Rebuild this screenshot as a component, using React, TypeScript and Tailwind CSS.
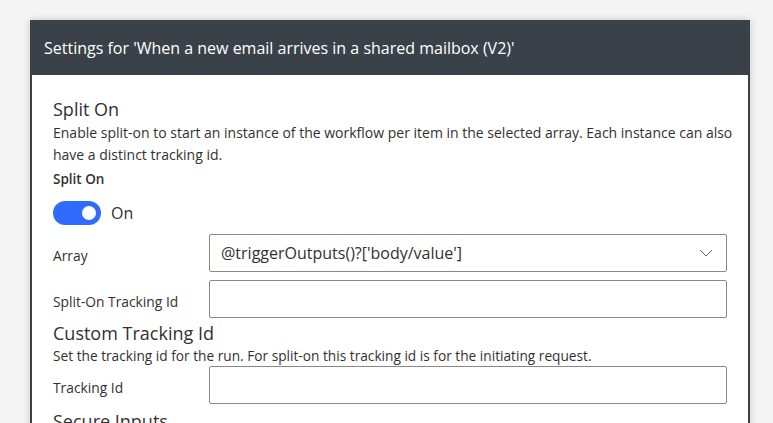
import React from "react";

const font = { fontFamily: "'Open Sans', 'Noto Sans', sans-serif" };

const Field = ({ label, value, select }: { label: string; value?: string; select?: boolean }) => (
  <div className="flex items-center">
    <label className="w-[156px] shrink-0 pt-[6px] text-[13.8px] text-[#323130]">{label}</label>
    <div className="flex h-[38px] w-[518px] items-center justify-between rounded-[2px] border border-[#8a8886] bg-white px-[11px]">
      <span className="text-[16px] text-[#323130]">{value}</span>
      {select && (
        <svg width="14" height="8" viewBox="0 0 14 8" className="mr-[2px]">
          <path d="M1 1 L7 7 L13 1" fill="none" stroke="#605e5c" strokeWidth="1" />
        </svg>
      )}
    </div>
  </div>
);

const App = () => {
  return (
    <div className="h-[423px] w-[773px] overflow-hidden bg-[#f4f4f4] pt-[20px] pl-[30px]" style={font}>
      <div className="h-[420px] w-[720px] border-x-2 border-[#3b4148] bg-white shadow-[0_0_8px_rgba(0,0,0,0.18)]">
        <div className="flex h-[55px] items-center bg-[#3b4148] px-[12px] text-[16px] text-white">
          Settings for 'When a new email arrives in a shared mailbox (V2)'
        </div>
        <div className="px-[21px] pt-[21px] text-[#323130]">
          <h2 className="text-[18px] leading-[26px]">Split On</h2>
          <p className="w-[690px] text-[14px] leading-[22px]">
            Enable split-on to start an instance of the workflow per item in the selected array. Each instance can also have a distinct tracking id.
          </p>
          <div className="mt-[2px] text-[13.5px] font-semibold leading-[22px]">Split On</div>
          <div className="mt-[11px] flex items-center gap-[10px]">
            <div className="flex h-[24px] w-[48px] items-center justify-end rounded-full bg-[#2f6bff] pr-[5px]">
              <div className="h-[14px] w-[14px] rounded-full bg-white" />
            </div>
            <span className="text-[16px]">On</span>
          </div>
          <div className="mt-[9px] flex flex-col gap-[8px]">
            <Field label="Array" value="@triggerOutputs()?['body/value']" select />
            <Field label="Split-On Tracking Id" />
          </div>
          <h2 className="mt-[2px] text-[18px] leading-[26px]">Custom Tracking Id</h2>
          <p className="text-[13.7px] leading-[20px]">
            Set the tracking id for the run. For split-on this tracking id is for the initiating request.
          </p>
          <div>
            <Field label="Tracking Id" />
          </div>
          <h2 className="mt-[4px] text-[18px] leading-[26px]">Secure Inputs</h2>
        </div>
      </div>
    </div>
  );
};

export default App;
